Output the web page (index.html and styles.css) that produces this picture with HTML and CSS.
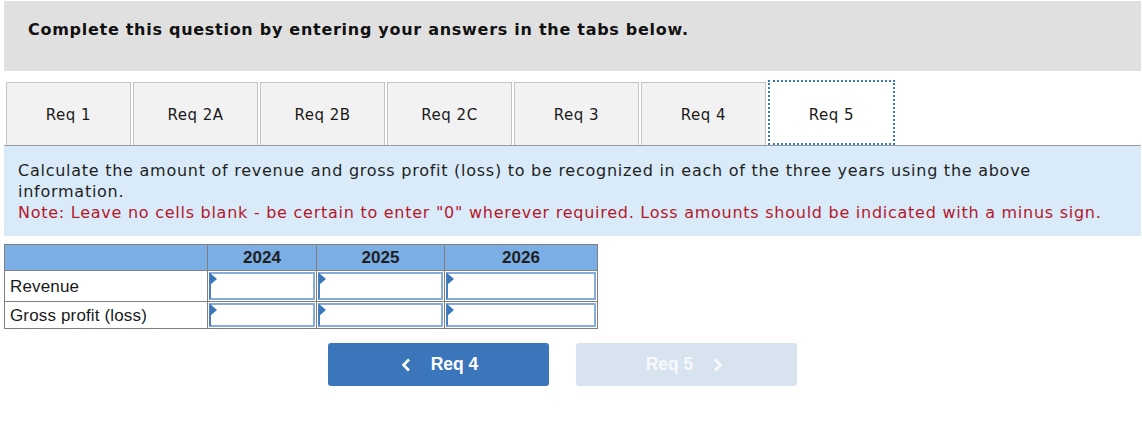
FILE: index.html
```html
<!DOCTYPE html>
<html>
<head>
<meta charset="utf-8">
<link rel="stylesheet" href="styles.css">
</head>
<body>
<div class="page">
  <div class="banner">Complete this question by entering your answers in the tabs below.</div>
  <div class="tabs">
    <div class="tab">Req 1</div>
    <div class="tab">Req 2A</div>
    <div class="tab">Req 2B</div>
    <div class="tab">Req 2C</div>
    <div class="tab">Req 3</div>
    <div class="tab">Req 4</div>
    <div class="tab active">Req 5</div>
  </div>
  <div class="panel">
    <p class="instr">Calculate the amount of revenue and gross profit (loss) to be recognized in each of the three years using the above information.</p>
    <p class="note">Note: Leave no cells blank - be certain to enter "0" wherever required. Loss amounts should be indicated with a minus sign.</p>
  </div>
  <table class="grid">
    <thead>
      <tr><th class="lbl"></th><th class="c1">2024</th><th class="c2">2025</th><th class="c3">2026</th></tr>
    </thead>
    <tbody>
      <tr><td class="lbl">Revenue</td><td class="in"><div class="box"></div></td><td class="in"><div class="box"></div></td><td class="in"><div class="box"></div></td></tr>
      <tr><td class="lbl">Gross profit (loss)</td><td class="in"><div class="box"></div></td><td class="in"><div class="box"></div></td><td class="in"><div class="box"></div></td></tr>
    </tbody>
  </table>
  <div class="nav">
    <button class="btn prev"><svg class="chev" width="10" height="14" viewBox="0 0 10 14"><polyline points="8,1.5 2.5,7 8,12.5" fill="none" stroke="currentColor" stroke-width="2.6"/></svg><span>Req 4</span></button>
    <button class="btn next"><span>Req 5</span><svg class="chev" width="10" height="14" viewBox="0 0 10 14"><polyline points="2,1.5 7.5,7 2,12.5" fill="none" stroke="currentColor" stroke-width="2.6"/></svg></button>
  </div>
</div>
</body>
</html>
```

FILE: styles.css
```css
* { box-sizing: border-box; }
body {
  margin: 0;
  background: #ffffff;
  font-family: "DejaVu Sans", Verdana, sans-serif;
  color: #1a1a1a;
}
.page {
  padding: 1px 1px 0 4px;
}
.banner {
  background: #e0e0e0;
  height: 70px;
  padding: 19px 0 0 24px;
  font-weight: bold;
  font-size: 16px;
  letter-spacing: 0.72px;
  color: #111;
}
.tabs {
  display: flex;
  gap: 2px;
  padding: 11px 0 0 2px;
}
.tab {
  width: 125px;
  height: 63px;
  background: #f2f2f2;
  border: 1px solid #c4c4c4;
  border-bottom: none;
  display: flex;
  align-items: center;
  justify-content: center;
  padding-top: 2px;
  font-size: 15px;
  letter-spacing: 0.5px;
  color: #1a1a1a;
}
.tab.active {
  background: #ffffff;
  border: 2px dotted #3d77bd;
  width: 127px;
  margin-top: -2px;
  height: 65px;
  padding-top: 5px;
}
.panel {
  background: #d9ebf9;
  border-top: 1px solid #9a9a9a;
  height: 91px;
  padding: 14px 10px 0 14px;
  font-size: 16px;
  letter-spacing: 0.74px;
  line-height: 21px;
}
.panel p { margin: 0; }
.instr { color: #1f1f1f; }
.note { color: #b5172b; }
.grid {
  margin-top: 8px;
  border-collapse: collapse;
  font-family: "Liberation Sans", Arial, sans-serif;
  font-size: 17px;
}
.grid th, .grid td {
  border: 1px solid #808080;
  padding: 0;
}
.grid thead th {
  background: #7aaee5;
  height: 26px;
  font-weight: bold;
  font-size: 17px;
  color: #1f1f1f;
  text-align: center;
}
.grid th.lbl, .grid td.lbl { width: 203px; }
.grid .c1 { width: 109px; }
.grid .c2 { width: 128px; }
.grid .c3 { width: 153px; }
.grid td.lbl {
  text-align: left;
  padding-left: 5px;
  padding-top: 1px;
  letter-spacing: 0.15px;
  color: #1a1a1a;
}
.grid tbody tr:first-child td { height: 31px; }
.grid tbody tr:last-child td { height: 27px; }
.grid td.in { padding: 1px; }
.box {
  position: relative;
  height: 100%;
  min-height: 25px;
  background: #fff;
  border: 2px solid #85acdc;
  border-left-color: #4a7fc2;
}
.grid tbody tr:last-child .box { min-height: 23px; }
.box::before {
  content: "";
  position: absolute;
  left: -1px;
  top: -1px;
  border-top: 6px solid transparent;
  border-bottom: 6px solid transparent;
  border-left: 7px solid #3a76b9;
}
.nav {
  display: flex;
  gap: 27px;
  padding: 14px 0 0 324px;
}
.btn {
  width: 221px;
  height: 43px;
  border: none;
  border-radius: 3px;
  font-family: "Liberation Sans", Arial, sans-serif;
  font-weight: bold;
  font-size: 17.5px;
  display: flex;
  align-items: center;
  justify-content: center;
  gap: 20px;
  color: #fff;
}
.prev { background: #3a76b9; padding-right: 4px; }
.next { background: #d8e3f0; color: #f7f9fc; padding-left: 2px; }
```
